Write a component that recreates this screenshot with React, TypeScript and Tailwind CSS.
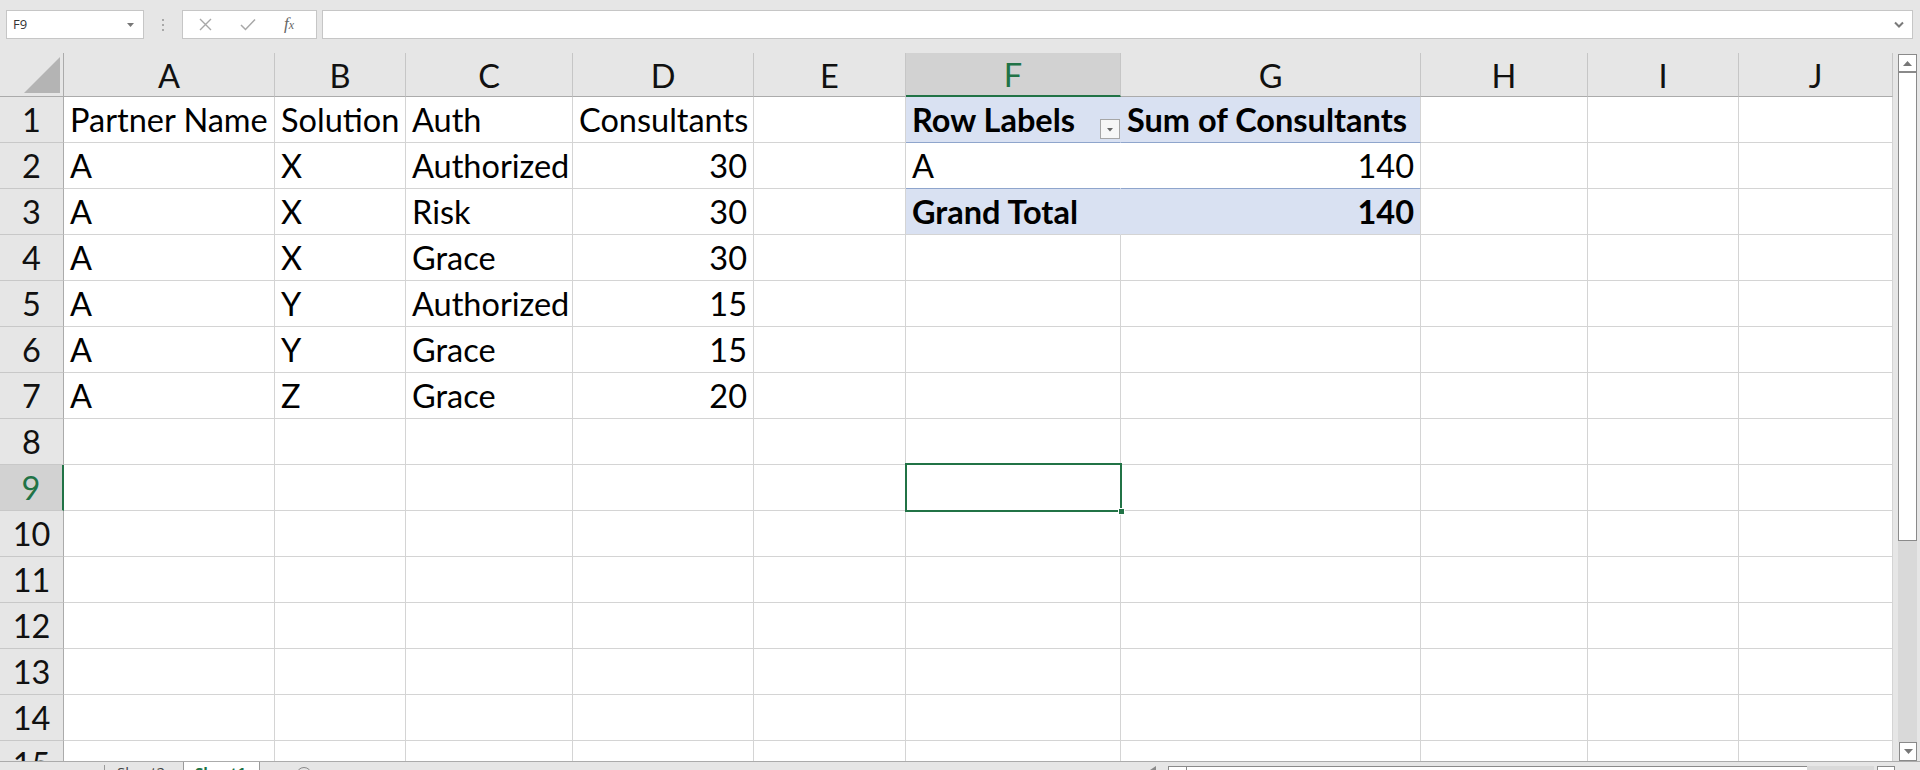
import React from 'react';

// Excel-like sheet with a small pivot table, drawn at the size of the screenshot.

const COLS = [
  { id: 'A', w: 'w-[211px]' },
  { id: 'B', w: 'w-[131px]' },
  { id: 'C', w: 'w-[167px]' },
  { id: 'D', w: 'w-[181px]' },
  { id: 'E', w: 'w-[152px]' },
  { id: 'F', w: 'w-[215px]' },
  { id: 'G', w: 'w-[300px]' },
  { id: 'H', w: 'w-[167px]' },
  { id: 'I', w: 'w-[151px]' },
  { id: 'J', w: 'w-[154px]' },
];

type Cell = { t: string; right?: boolean; bold?: boolean };

const DATA: Record<number, Record<string, Cell>> = {
  1: {
    A: { t: 'Partner Name' },
    B: { t: 'Solution' },
    C: { t: 'Auth' },
    D: { t: 'Consultants' },
    F: { t: 'Row Labels', bold: true },
    G: { t: 'Sum of Consultants', bold: true },
  },
  2: {
    A: { t: 'A' }, B: { t: 'X' }, C: { t: 'Authorized' }, D: { t: '30', right: true },
    F: { t: 'A' }, G: { t: '140', right: true },
  },
  3: {
    A: { t: 'A' }, B: { t: 'X' }, C: { t: 'Risk' }, D: { t: '30', right: true },
    F: { t: 'Grand Total', bold: true }, G: { t: '140', right: true, bold: true },
  },
  4: { A: { t: 'A' }, B: { t: 'X' }, C: { t: 'Grace' }, D: { t: '30', right: true } },
  5: { A: { t: 'A' }, B: { t: 'Y' }, C: { t: 'Authorized' }, D: { t: '15', right: true } },
  6: { A: { t: 'A' }, B: { t: 'Y' }, C: { t: 'Grace' }, D: { t: '15', right: true } },
  7: { A: { t: 'A' }, B: { t: 'Z' }, C: { t: 'Grace' }, D: { t: '20', right: true } },
};

const ROWS = Array.from({ length: 15 }, (_, i) => i + 1);

// pivot table colours for F1:G3
function tone(row: number, col: string) {
  if (row === 1 && col === 'F') return 'bg-[#d9e1f2] border-r-[#d9e1f2] border-b-[#8fa5cc]';
  if (row === 1 && col === 'G') return 'bg-[#d9e1f2] border-r-[#d4d4d4] border-b-[#8fa5cc]';
  if (row === 2 && col === 'F') return 'bg-white border-r-white border-b-[#8fa5cc]';
  if (row === 2 && col === 'G') return 'bg-white border-r-[#d4d4d4] border-b-[#8fa5cc]';
  if (row === 3 && col === 'F') return 'bg-[#d9e1f2] border-r-[#d9e1f2] border-b-[#d4d4d4]';
  if (row === 3 && col === 'G') return 'bg-[#d9e1f2] border-r-[#d4d4d4] border-b-[#d4d4d4]';
  return 'bg-white border-r-[#d4d4d4] border-b-[#d4d4d4]';
}

function FilterButton() {
  return (
    <div className="absolute right-0 bottom-[3px] w-[20px] h-[20px] bg-[#f7f7f7] border border-[#a6a6a6] flex items-end justify-center pb-[6px]">
      <svg width="6" height="4" viewBox="0 0 6 4">
        <polygon points="0,0 6,0 3,3.5" fill="#666" />
      </svg>
    </div>
  );
}

function Toolbar() {
  return (
    <div className="h-[53px] flex items-start pt-[10px] pl-[6px]">
      <div className="w-[138px] h-[29px] bg-white border border-[#c6c6c6] flex items-center justify-between pl-[6px] pr-[9px] text-[13px] text-[#333] font-['Open_Sans',sans-serif]">
        <span>F9</span>
        <svg width="7" height="4" viewBox="0 0 7 4">
          <polygon points="0,0 7,0 3.5,4" fill="#777" />
        </svg>
      </div>
      <div className="w-[38px] h-[29px] flex flex-col items-center justify-center gap-[3px]">
        <span className="w-[2px] h-[2px] bg-[#a8a8a8]" />
        <span className="w-[2px] h-[2px] bg-[#a8a8a8]" />
        <span className="w-[2px] h-[2px] bg-[#a8a8a8]" />
      </div>
      <div className="w-[135px] h-[29px] bg-white border border-[#c6c6c6] flex items-center pl-[16px] gap-[28px]">
        <svg width="13" height="13" viewBox="0 0 13 13" fill="none" stroke="#a8a8a8" strokeWidth="1.4">
          <path d="M1 1 L12 12 M12 1 L1 12" />
        </svg>
        <svg width="16" height="13" viewBox="0 0 16 13" fill="none" stroke="#a8a8a8" strokeWidth="1.5">
          <polyline points="1,7 5.5,11.5 15,1.5" />
        </svg>
        <span className="font-['Liberation_Serif',serif] italic text-[17px] leading-none text-[#666] -mt-[2px]">
          f<span className="text-[12px]">x</span>
        </span>
      </div>
      <div className="ml-[5px] w-[1591px] h-[29px] bg-white border border-[#c6c6c6] flex items-center justify-end pr-[8px]">
        <svg width="10" height="7" viewBox="0 0 10 7" fill="none" stroke="#7a7a7a" strokeWidth="2">
          <polyline points="1,1.5 5,5.5 9,1.5" />
        </svg>
      </div>
    </div>
  );
}

function HeaderRow() {
  return (
    <div className="flex h-[44px] shrink-0">
      <div className="w-[64px] shrink-0 h-[44px] bg-[#e6e6e6] border-r border-b border-r-[#ababab] border-b-[#ababab] relative">
        <svg className="absolute left-0 top-0" width="63" height="43" viewBox="0 0 63 43">
          <polygon points="24,40 60,40 60,4" fill="#b4b4b4" />
        </svg>
      </div>
      {COLS.map(c => (
        <div
          key={c.id}
          className={`${c.w} shrink-0 h-[44px] border-r border-r-[#c6c6c6] flex items-center justify-center leading-none pt-[3px] ${
            c.id === 'F'
              ? 'bg-[#d2d2d2] text-[#217346] border-b-2 border-b-[#217346]'
              : 'bg-[#e6e6e6] text-[#111] border-b border-b-[#ababab]'
          }`}
        >
          {c.id}
        </div>
      ))}
    </div>
  );
}

function Row({ n }: { n: number }) {
  const sel = n === 9;
  return (
    <div className="flex h-[46px] shrink-0">
      <div
        className={`w-[64px] shrink-0 h-[46px] border-b border-b-[#c8c8c8] flex items-center justify-center leading-none pt-[2px] ${
          sel
            ? 'bg-[#d2d2d2] text-[#217346] border-r-2 border-r-[#217346]'
            : 'bg-[#e6e6e6] text-[#111] border-r border-r-[#ababab]'
        }`}
      >
        {n}
      </div>
      {COLS.map(c => {
        const cell = DATA[n]?.[c.id];
        return (
          <div
            key={c.id}
            className={`${c.w} ${tone(n, c.id)} shrink-0 h-[46px] border-r border-b flex items-center px-[6px] pt-[2px] leading-none whitespace-nowrap relative ${
              cell?.right ? 'justify-end' : 'justify-start'
            } ${cell?.bold ? 'font-bold' : ''}`}
          >
            {cell?.t}
            {n === 1 && c.id === 'F' && <FilterButton />}
            {sel && c.id === 'F' && (
              <div className="absolute -left-[1px] -top-[2px] -right-[2px] -bottom-[2px] border-2 border-[#217346] z-10">
                <div className="absolute -right-[5px] -bottom-[5px] w-[7px] h-[7px] bg-[#217346] border border-white" />
              </div>
            )}
          </div>
        );
      })}
    </div>
  );
}

function VScroll() {
  return (
    <div className="w-[27px] h-[708px] bg-[#e6e6e6] flex flex-col pl-[5px] pr-[3px] pt-[1px]">
      <div className="h-[487px] shrink-0 border border-[#8a8a8a] bg-white">
        <div className="h-[18px] border-b-2 border-b-[#8a8a8a] flex items-center justify-center">
          <svg width="9" height="5" viewBox="0 0 9 5">
            <polygon points="0,5 9,5 4.5,0" fill="#777" />
          </svg>
        </div>
      </div>
      <div className="flex-1 bg-[#d9d9d9]" />
      <div className="h-[19px] shrink-0 ml-[1px] border border-[#8a8a8a] bg-white flex items-center justify-center">
        <svg width="9" height="5" viewBox="0 0 9 5">
          <polygon points="0,0 9,0 4.5,5" fill="#777" />
        </svg>
      </div>
    </div>
  );
}

function TabBar() {
  return (
    <div className="h-[9px] bg-[#e6e6e6] border-t border-t-[#ababab] flex items-start overflow-hidden text-[15px] leading-none font-['Open_Sans',sans-serif]">
      <div className="w-[104px] shrink-0" />
      <div className="w-[79px] h-[8px] shrink-0 border-l border-l-[#9a9a9a] mt-[3px] pl-[12px] text-[#444]">Sheet2</div>
      <div className="w-[77px] h-[8px] shrink-0 bg-white border-x border-x-[#9a9a9a] pl-[11px] pt-[3px] font-bold text-[#217346]">Sheet1</div>
      <div className="ml-[36px] mt-[5px] w-[16px] h-[16px] rounded-full border border-[#8a8a8a] shrink-0" />
      <div className="ml-[838px] mt-[4px] shrink-0">
        <svg width="6" height="8" viewBox="0 0 6 8">
          <polygon points="6,0 6,8 0,4" fill="#8a8a8a" />
        </svg>
      </div>
      <div className="ml-[12px] mt-[4px] w-[18px] h-[8px] shrink-0 bg-white border-l border-t border-[#8a8a8a]" />
      <div className="mt-[4px] w-[621px] h-[8px] shrink-0 bg-white border-l border-t border-[#8a8a8a]" />
      <div className="mt-[4px] w-[67px] h-[8px] shrink-0 bg-[#d9d9d9]" />
      <div className="ml-[3px] mt-[4px] w-[18px] h-[8px] shrink-0 bg-white border-x border-t border-[#8a8a8a]" />
    </div>
  );
}

export default function App() {
  return (
    <div className="w-[1920px] h-[770px] bg-[#e6e6e6] overflow-hidden flex flex-col">
      <Toolbar />
      <div className="flex h-[708px]">
        <div className="w-[1893px] h-[708px] overflow-hidden flex flex-col text-[32.5px] text-black font-['Lato','Open_Sans',sans-serif]">
          <HeaderRow />
          {ROWS.map(n => (
            <Row key={n} n={n} />
          ))}
        </div>
        <VScroll />
      </div>
      <TabBar />
    </div>
  );
}
